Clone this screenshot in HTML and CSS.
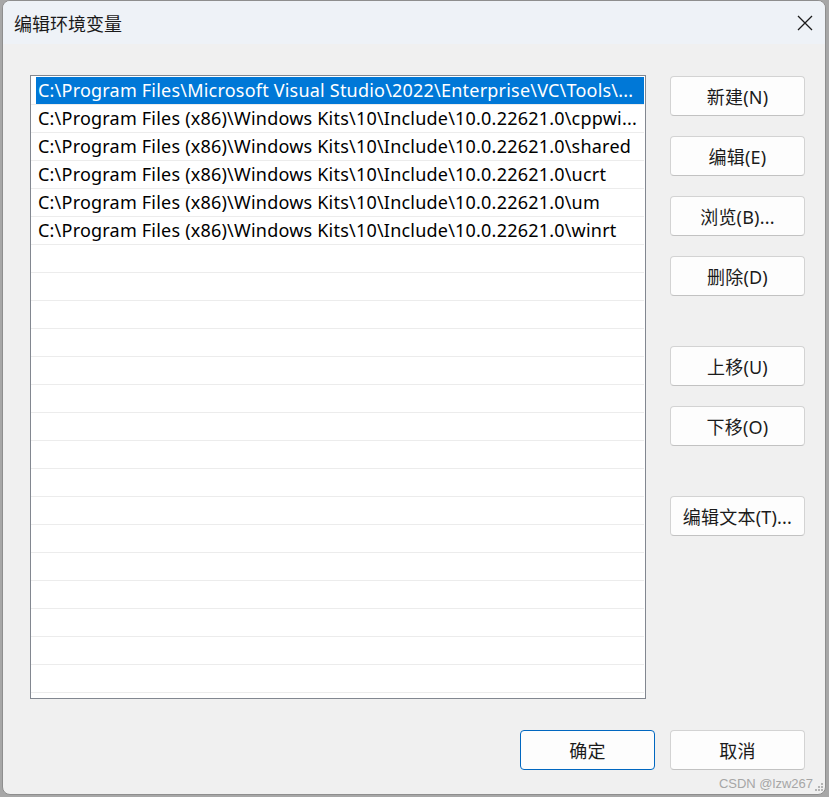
FILE: index.html
```html
<!DOCTYPE html>
<html lang="zh-CN">
<head>
<meta charset="utf-8">
<title>编辑环境变量</title>
<link rel="stylesheet" href="styles.css">
</head>
<body>
<div class="window">
  <div class="titlebar">
    <span class="title">编辑环境变量</span>
    <div class="close">
      <svg width="16" height="16" viewBox="0 0 16 16"><path d="M1 1 L15 15 M15 1 L1 15" stroke="#1b1b1b" stroke-width="1.3" fill="none"/></svg>
    </div>
  </div>
  <div class="content">
    <div class="main">
      <div class="listbox">
        <div class="row selected"><div class="label">C:\Program Files\Microsoft Visual Studio\2022\Enterprise\VC\Tools\...</div></div>
        <div class="row"><div class="label">C:\Program Files (x86)\Windows Kits\10\Include\10.0.22621.0\cppwi...</div></div>
        <div class="row"><div class="label">C:\Program Files (x86)\Windows Kits\10\Include\10.0.22621.0\shared</div></div>
        <div class="row"><div class="label">C:\Program Files (x86)\Windows Kits\10\Include\10.0.22621.0\ucrt</div></div>
        <div class="row"><div class="label">C:\Program Files (x86)\Windows Kits\10\Include\10.0.22621.0\um</div></div>
        <div class="row"><div class="label">C:\Program Files (x86)\Windows Kits\10\Include\10.0.22621.0\winrt</div></div>
        <div class="row"><div class="label"></div></div>
        <div class="row"><div class="label"></div></div>
        <div class="row"><div class="label"></div></div>
        <div class="row"><div class="label"></div></div>
        <div class="row"><div class="label"></div></div>
        <div class="row"><div class="label"></div></div>
        <div class="row"><div class="label"></div></div>
        <div class="row"><div class="label"></div></div>
        <div class="row"><div class="label"></div></div>
        <div class="row"><div class="label"></div></div>
        <div class="row"><div class="label"></div></div>
        <div class="row"><div class="label"></div></div>
        <div class="row"><div class="label"></div></div>
        <div class="row"><div class="label"></div></div>
        <div class="row"><div class="label"></div></div>
        <div class="row"><div class="label"></div></div>
      </div>
      <div class="side">
        <div class="group">
          <div class="btn">新建(N)</div>
          <div class="btn">编辑(E)</div>
          <div class="btn">浏览(B)...</div>
          <div class="btn">删除(D)</div>
        </div>
        <div class="group">
          <div class="btn">上移(U)</div>
          <div class="btn">下移(O)</div>
        </div>
        <div class="group">
          <div class="btn">编辑文本(T)...</div>
        </div>
      </div>
    </div>
    <div class="footer">
      <div class="btn default">确定</div>
      <div class="btn">取消</div>
    </div>
  </div>
  <div class="watermark">CSDN @lzw267</div>
  <svg class="grip" width="9" height="9" viewBox="0 0 9 9">
    <rect x="6" y="0" width="2" height="2" fill="#b4b4b4"/>
    <rect x="3" y="3" width="2" height="2" fill="#b4b4b4"/>
    <rect x="6" y="3" width="2" height="2" fill="#b4b4b4"/>
    <rect x="0" y="6" width="2" height="2" fill="#b4b4b4"/>
    <rect x="3" y="6" width="2" height="2" fill="#b4b4b4"/>
    <rect x="6" y="6" width="2" height="2" fill="#b4b4b4"/>
  </svg>
</div>
</body>
</html>
```
FILE: styles.css
```css
html, body {
  margin: 0;
  padding: 0;
}
body {
  width: 829px;
  height: 797px;
  overflow: hidden;
  background: #a7a7a7;
  font-family: "Noto Sans", "Noto Sans CJK SC", sans-serif;
  color: #1b1b1b;
}
.window {
  position: relative;
  margin-left: 2px;
  width: 824px;
  height: 795px;
  box-sizing: border-box;
  border: 1px solid #8e8e8e;
  border-radius: 8px;
  background: #f0f0f0;
  overflow: hidden;
  display: flex;
  flex-direction: column;
}
.titlebar {
  flex: none;
  height: 43px;
  background: #eef2f7;
  display: flex;
  align-items: center;
  justify-content: space-between;
  padding-left: 11px;
}
.title {
  font-family: "Noto Sans CJK SC", sans-serif;
  font-size: 18px;
  color: #1a1a1a;
}
.close {
  width: 40px;
  height: 43px;
  display: flex;
  align-items: center;
  justify-content: center;
}
.content {
  flex: 1;
  padding: 31px 20px 0 27px;
  display: flex;
  flex-direction: column;
}
.main {
  display: flex;
  gap: 24px;
}
.listbox {
  width: 616px;
  height: 624px;
  box-sizing: border-box;
  border: 1px solid #828790;
  background: #ffffff;
  padding: 1px 1px 0 0;
  overflow: hidden;
}
.row {
  height: 28px;
  box-sizing: border-box;
  border-bottom: 1px solid #ececec;
  padding-left: 5px;
  display: flex;
}
.label {
  flex: 1;
  height: 27px;
  line-height: 27px;
  padding-left: 2px;
  font-size: 18px;
  letter-spacing: 0.21px;
  white-space: nowrap;
  overflow: hidden;
  color: #000000;
}
.row.selected .label {
  background: #0078d7;
  color: #ffffff;
}
.side {
  width: 135px;
  padding-top: 1px;
  display: flex;
  flex-direction: column;
  gap: 50px;
}
.group {
  display: flex;
  flex-direction: column;
  gap: 20px;
}
.btn {
  height: 40px;
  box-sizing: border-box;
  border: 1px solid #d3d3d3;
  border-bottom-color: #c2c2c2;
  border-radius: 4px;
  background: #fdfdfd;
  font-size: 18px;
  letter-spacing: 0.2px;
  color: #1b1b1b;
  display: flex;
  align-items: center;
  justify-content: center;
  white-space: nowrap;
}
.footer {
  margin-top: 31px;
  display: flex;
  justify-content: flex-end;
  gap: 15px;
}
.footer .btn {
  width: 135px;
}
.btn.default {
  border-color: #0067c0;
}
.watermark {
  position: absolute;
  right: 12px;
  bottom: 3px;
  font-family: "Liberation Sans", sans-serif;
  font-size: 13px;
  line-height: 15px;
  color: #a6a6a6;
}
.grip {
  position: absolute;
  right: 1px;
  bottom: 2px;
}
```
